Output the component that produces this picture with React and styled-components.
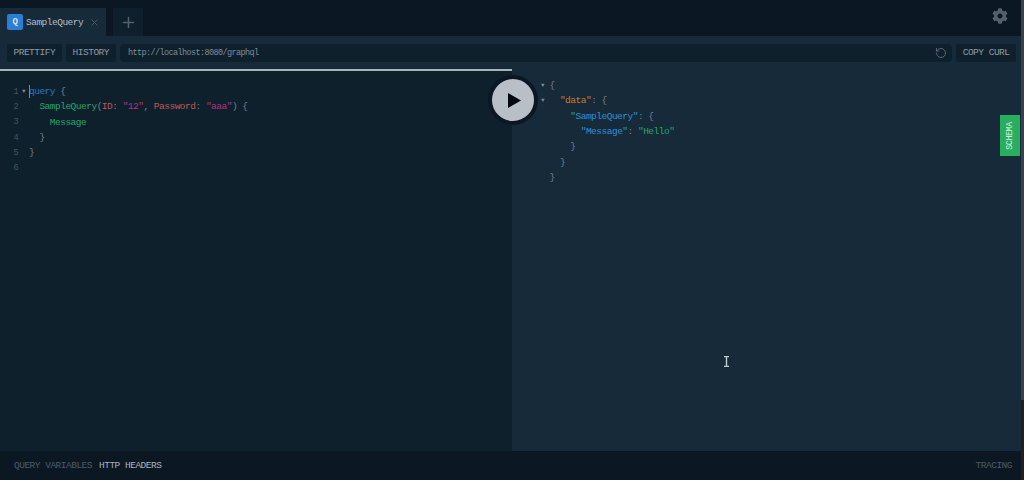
import React from 'react';
import styled, { createGlobalStyle } from 'styled-components';
import { X, Plus, RotateCcw } from 'lucide-react';
import { FaCog } from 'react-icons/fa';

const GlobalStyle = createGlobalStyle`
  html, body { margin: 0; padding: 0; background: #0b1924; }
  #root { width: 1024px; height: 480px; overflow: hidden; }
`;

const Page = styled.div`
  display: flex;
  width: 1024px;
  height: 480px;
  font-family: "Liberation Mono", "DejaVu Sans Mono", monospace;
  background: #172a3a;
  overflow: hidden;
`;

const Main = styled.div`
  flex: 1;
  min-width: 0;
  display: flex;
  flex-direction: column;
`;

const Scrollbar = styled.div`
  width: 3px;
  background: #231f20;
  &::before {
    content: '';
    display: block;
    height: 400px;
    background: #39424a;
  }
`;

const TabBar = styled.div`
  height: 36px;
  flex: none;
  display: flex;
  align-items: flex-end;
  gap: 7px;
  background: #0b1722;
  position: relative;
`;

const Tab = styled.div`
  width: 106px;
  height: 28px;
  box-sizing: border-box;
  display: flex;
  align-items: center;
  padding-left: 7px;
  background: #172a3a;
  color: #b5bdc4;
  font-size: 9.5px;
  letter-spacing: -0.5px;
`;

const Badge = styled.span`
  width: 16px;
  height: 16px;
  margin-right: 3px;
  border-radius: 2px;
  background: #2a7ed3;
  color: #d8e6f3;
  font-weight: bold;
  font-size: 9px;
  display: flex;
  align-items: center;
  justify-content: center;
`;

const TabName = styled.span`
  width: 63px;
`;

const AddTab = styled.div`
  width: 30px;
  height: 28px;
  display: flex;
  align-items: center;
  justify-content: center;
  background: #0f202d;
  color: #54616c;
`;

const Gear = styled.div`
  position: absolute;
  top: 8px;
  right: 13px;
  color: #54616c;
  display: flex;
`;

const Toolbar = styled.div`
  height: 33px;
  flex: none;
  display: flex;
  align-items: center;
  gap: 4.5px;
  padding: 0 5px 0 7px;
  box-sizing: border-box;
  background: #172a3a;
`;

const ToolButton = styled.div`
  height: 18px;
  padding: 0 6.5px;
  display: flex;
  align-items: center;
  background: #0f202d;
  border-radius: 2px;
  color: #8f9aa3;
  font-size: 9.5px;
  letter-spacing: -0.5px;
`;

const UrlBar = styled.div`
  flex: 1;
  height: 18px;
  display: flex;
  align-items: center;
  justify-content: space-between;
  padding: 0 5px 0 8px;
  background: #0f202d;
  border-radius: 4px;
  color: #7f8b95;
  font-size: 8.5px;
  letter-spacing: -0.6px;
`;

const Panels = styled.div`
  flex: 1;
  min-height: 0;
  display: flex;
  position: relative;
`;

const EditorPane = styled.div`
  width: 511.5px;
  flex: none;
  box-sizing: border-box;
  border-top: 2px solid #a9b3ba;
  background: #0f202d;
  padding-top: 13px;
`;

const ResultPane = styled.div`
  flex: 1;
  background: #172a3a;
  padding-top: 9px;
`;

const CodeRow = styled.div`
  height: 15.3px;
  display: flex;
  align-items: center;
  font-size: 9.5px;
  letter-spacing: -0.5px;
  color: #75808a;
`;

const Code = styled.span`
  white-space: pre;
`;

const LineNo = styled.span`
  width: 18px;
  text-align: right;
  font-size: 8.5px;
  color: #47545f;
`;

const Fold = styled.span`
  width: 11px;
  text-align: center;
  font-size: 6px;
  color: #7d8993;
`;

const ResultFold = styled(Fold)`
  margin-left: 25.5px;
  margin-right: 1.5px;
`;

const Token = styled.span`
  color: ${p => p.$c};
`;

const Cursor = styled.span`
  width: 1px;
  height: 13px;
  margin-right: -1px;
  background: #6f8ba3;
`;

const PlayButton = styled.div`
  position: absolute;
  top: 6px;
  left: 488px;
  width: 50px;
  height: 50px;
  box-sizing: border-box;
  border: 4.5px solid #0b1722;
  border-radius: 50%;
  background: #b9bfc7;
  display: flex;
  align-items: center;
  justify-content: center;
  & > svg { margin-left: 3px; }
`;

const SchemaTab = styled.div`
  position: absolute;
  top: 46px;
  right: 1px;
  width: 20px;
  height: 41px;
  background: #27ae60;
  color: #d5f0df;
  font-size: 8.5px;
  letter-spacing: -0.5px;
  display: flex;
  align-items: center;
  justify-content: center;
  & > span { transform: rotate(-90deg); }
`;

const IBeam = styled.svg`
  position: absolute;
  left: 723px;
  top: 287px;
`;

const Footer = styled.div`
  height: 29px;
  flex: none;
  display: flex;
  align-items: center;
  padding: 0 9px 0 14px;
  background: #0b1823;
  font-size: 9.5px;
  letter-spacing: -0.5px;
`;

const FooterTab = styled.span`
  color: ${p => (p.$active ? '#a8b2ba' : '#4e5b66')};
  margin-right: 7px;
  &:last-child { margin: 0 0 0 auto; }
`;

const KEY = '#2f8fd6';
const FIELD = '#29a568';
const ARG = '#c0584f';
const STR = '#b5307f';

const App = () => {
  return (
    <Page>
      <GlobalStyle />
      <Main>
        <TabBar>
          <Tab>
            <Badge>Q</Badge>
            <TabName>SampleQuery</TabName>
            <X size={11} color="#4f5d69" />
          </Tab>
          <AddTab><Plus size={17} strokeWidth={2.2} /></AddTab>
          <Gear><FaCog size={16} /></Gear>
        </TabBar>
        <Toolbar>
          <ToolButton>PRETTIFY</ToolButton>
          <ToolButton>HISTORY</ToolButton>
          <UrlBar>
            http://localhost:8080/graphql
            <RotateCcw size={12} color="#5a6771" />
          </UrlBar>
          <ToolButton>COPY CURL</ToolButton>
        </Toolbar>
        <Panels>
          <EditorPane>
            <CodeRow><LineNo>1</LineNo><Fold>▼</Fold><Cursor /><Code><Token $c="#2a78c4">query</Token> {'{'}</Code></CodeRow>
            <CodeRow>
              <LineNo>2</LineNo><Fold />
              <Code>{'  '}<Token $c={FIELD}>SampleQuery</Token>(<Token $c={ARG}>ID</Token>: <Token $c={STR}>"12"</Token>, <Token $c={ARG}>Password</Token>: <Token $c={STR}>"aaa"</Token>) {'{'}</Code>
            </CodeRow>
            <CodeRow><LineNo>3</LineNo><Fold /><Code>{'    '}<Token $c={FIELD}>Message</Token></Code></CodeRow>
            <CodeRow><LineNo>4</LineNo><Fold /><Code>{'  }'}</Code></CodeRow>
            <CodeRow><LineNo>5</LineNo><Fold /><Code>{'}'}</Code></CodeRow>
            <CodeRow><LineNo>6</LineNo></CodeRow>
          </EditorPane>
          <ResultPane>
            <CodeRow><ResultFold>▼</ResultFold><Code>{'{'}</Code></CodeRow>
            <CodeRow><ResultFold>▼</ResultFold><Code>{'  '}<Token $c="#c57f1e">"data"</Token>: {'{'}</Code></CodeRow>
            <CodeRow><ResultFold /><Code>{'    '}<Token $c={KEY}>"SampleQuery"</Token>: {'{'}</Code></CodeRow>
            <CodeRow><ResultFold /><Code>{'      '}<Token $c={KEY}>"Message"</Token>: <Token $c={FIELD}>"Hello"</Token></Code></CodeRow>
            <CodeRow><ResultFold /><Code>{'    }'}</Code></CodeRow>
            <CodeRow><ResultFold /><Code>{'  }'}</Code></CodeRow>
            <CodeRow><ResultFold /><Code>{'}'}</Code></CodeRow>
          </ResultPane>
          <PlayButton>
            <svg width="13" height="15" viewBox="0 0 13 15"><path d="M0 0 L13 7.5 L0 15 Z" fill="#05090d" /></svg>
          </PlayButton>
          <SchemaTab><span>SCHEMA</span></SchemaTab>
          <IBeam width="7" height="11" viewBox="0 0 7 11">
            <path d="M1 .5 H6 M3.5 .5 V10.5 M1 10.5 H6" stroke="#c2c8cc" strokeWidth="1.4" fill="none" />
          </IBeam>
        </Panels>
        <Footer>
          <FooterTab>QUERY VARIABLES</FooterTab>
          <FooterTab $active>HTTP HEADERS</FooterTab>
          <FooterTab>TRACING</FooterTab>
        </Footer>
      </Main>
      <Scrollbar />
    </Page>
  );
};

export default App;
